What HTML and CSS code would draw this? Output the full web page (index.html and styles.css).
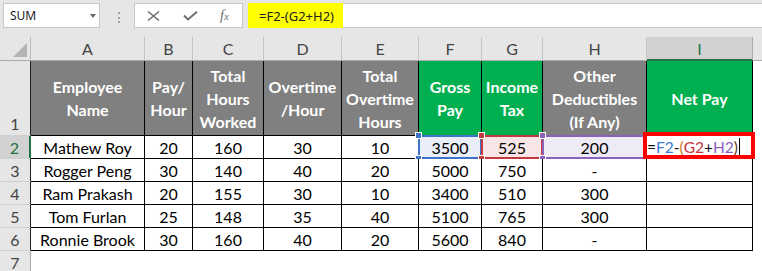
FILE: index.html
```html
<!DOCTYPE html>
<html>
<head>
<meta charset="utf-8">
<title>Net Pay</title>
<link rel="stylesheet" href="styles.css">
</head>
<body>
<div class="toolbar">
  <div class="namebox"><span>SUM</span><span class="caret"></span></div>
  <div class="grip"></div>
  <div class="fxbox">
    <svg class="ico-x" width="13" height="10" viewBox="0 0 13 10"><path d="M1 0.5 L12 9.5 M12 0.5 L1 9.5" stroke="#6e6e6e" stroke-width="1.5" fill="none"/></svg>
    <svg class="ico-ok" width="15" height="10" viewBox="0 0 15 10"><path d="M1 4.5 L5 8.5 L14 0.8" stroke="#6e6e6e" stroke-width="2" fill="none"/></svg>
    <span class="fx">f<span class="fxs">x</span></span>
  </div>
  <div class="fbar"><span class="fhl">=F2-(G2+H2)</span></div>
</div>
<div class="sheet">
  <div class="corner"><span class="tri"></span></div>
  <div class="ch">A</div><div class="ch">B</div><div class="ch">C</div><div class="ch">D</div><div class="ch">E</div><div class="ch">F</div><div class="ch">G</div><div class="ch">H</div><div class="ch sel">I</div><div class="ch last"></div>

  <div class="rh t top">1</div>
  <div class="hd">Employee<br>Name</div>
  <div class="hd">Pay/<br>Hour</div>
  <div class="hd">Total<br>Hours<br>Worked</div>
  <div class="hd">Overtime<br>/Hour</div>
  <div class="hd">Total<br>Overtime<br>Hours</div>
  <div class="hd g">Gross<br>Pay</div>
  <div class="hd g">Income<br>Tax</div>
  <div class="hd">Other<br>Deductibles<br>(If Any)</div>
  <div class="hd g">Net Pay</div>
  <div class="e"></div>

  <div class="rh t sel">2</div>
  <div class="c">Mathew Roy</div><div class="c">20</div><div class="c">160</div><div class="c">30</div><div class="c">10</div>
  <div class="c rf blue">3500<span class="rng"><i class="h tl"></i><i class="h tr"></i><i class="h bl"></i><i class="h br"></i></span></div>
  <div class="c rf red">525<span class="rng"><i class="h tl"></i><i class="h tr"></i><i class="h bl"></i><i class="h br"></i></span></div>
  <div class="c rf purple">200<span class="rng"><i class="h tl"></i><i class="h tr"></i><i class="h bl"></i><i class="h br"></i></span></div>
  <div class="c edit"><span class="k">=</span><span class="kb">F2</span><span class="k">-</span><span class="ko">(</span><span class="kr">G2</span><span class="k">+</span><span class="kp">H2</span><span class="kd">)</span><span class="cur"></span><span class="annot"></span></div>
  <div class="e"></div>

  <div class="rh t">3</div>
  <div class="c">Rogger Peng</div><div class="c">30</div><div class="c">140</div><div class="c">40</div><div class="c">20</div><div class="c">5000</div><div class="c">750</div><div class="c">-</div><div class="c"></div>
  <div class="e"></div>

  <div class="rh t">4</div>
  <div class="c">Ram Prakash</div><div class="c">20</div><div class="c">155</div><div class="c">30</div><div class="c">10</div><div class="c">3400</div><div class="c">510</div><div class="c">300</div><div class="c"></div>
  <div class="e"></div>

  <div class="rh t">5</div>
  <div class="c">Tom Furlan</div><div class="c">25</div><div class="c">148</div><div class="c">35</div><div class="c">40</div><div class="c">5100</div><div class="c">765</div><div class="c">300</div><div class="c"></div>
  <div class="e"></div>

  <div class="rh t">6</div>
  <div class="c">Ronnie Brook</div><div class="c">30</div><div class="c">160</div><div class="c">40</div><div class="c">20</div><div class="c">5600</div><div class="c">840</div><div class="c">-</div><div class="c"></div>
  <div class="e"></div>

  <div class="rh">7</div>
  <div class="e"></div><div class="e"></div><div class="e"></div><div class="e"></div><div class="e"></div><div class="e"></div><div class="e"></div><div class="e"></div><div class="e"></div><div class="e"></div>
</div>
</body>
</html>
```
FILE: styles.css
```css
* { box-sizing: border-box; margin: 0; padding: 0; }
html, body { width: 762px; height: 271px; overflow: hidden; background: #fff; }
body { font-family: "Lato", "Liberation Sans", sans-serif; }

.toolbar { height: 37px; background: #e6e6e6; display: flex; align-items: flex-start; padding-top: 3px; }
.namebox { margin-left: 3px; width: 97px; height: 25px; background: #fff; border: 1px solid #c6c6c6; display: flex; align-items: center; justify-content: space-between; padding: 0 3px 0 6px; font: 12px "Noto Sans", sans-serif; color: #222; }
.caret { width: 0; height: 0; border-left: 3.5px solid transparent; border-right: 3.5px solid transparent; border-top: 4px solid #666; }
.grip { margin-left: 18px; margin-top: 9px; width: 2px; height: 11px; border-left: 2px dotted #a0a0a0; }
.fxbox { margin-left: 14px; width: 109px; height: 25px; background: #fff; border: 1px solid #c6c6c6; display: flex; align-items: center; padding-left: 12px; }
.ico-x { margin-top: 1px; }
.ico-ok { margin-left: 23px; margin-top: 1px; }
.fx { margin-left: 22px; font: italic 14px "Liberation Serif", serif; color: #6e6e6e; }
.fxs { font-size: 11px; }
.fbar { margin-left: 5px; flex: 1; height: 25px; background: #fff; border: 1px solid #c6c6c6; border-right: none; }
.fhl { display: flex; align-items: center; width: 95px; height: 25px; margin: -1px 0 0 -1px; background: #ffff00; padding-left: 11px; font: 13px "Noto Sans", sans-serif; color: #222; }

.sheet { display: grid; grid-template-columns: 31px 114px 48px 71px 78px 77px 63px 61px 104px 106px 1fr; grid-template-rows: 24px 75px repeat(6, 23px); font-size: 16px; }
.corner { background: #e6e6e6; border-right: 1px solid #bcbcbc; border-bottom: 1px solid #ababab; position: relative; }
.tri { position: absolute; right: 3px; bottom: 3px; width: 0; height: 0; border-left: 14px solid transparent; border-bottom: 14px solid #b4b4b4; }
.ch { background: #e6e6e6; border-right: 1px solid #c4c4c4; border-bottom: 1px solid #ababab; color: #444; display: flex; align-items: center; justify-content: center; }
.ch.sel { background: #d2d2d2; color: #217346; border-bottom: 2px solid #217346; border-right-color: #ababab; }
.ch.last { border-right: none; }
.rh { background: #e6e6e6; border-right: 1px solid #ababab; border-bottom: 1px solid #cfcfcf; color: #444; display: flex; align-items: center; justify-content: center; }
.rh.t { border-right-color: #222; }
.rh.top { align-items: flex-end; padding-bottom: 2px; }
.rh.sel { background: #d2d2d2; color: #217346; border-right: 2px solid #217346; }

.hd { background: #808080; color: #fff; font-weight: 700; line-height: 23px; text-align: center; display: flex; flex-direction: column; justify-content: center; border-right: 1px solid #000; border-bottom: 1px solid #000; }
.hd.g { background: #00b050; }
.c { background: #fff; color: #000; border-right: 1px solid #000; border-bottom: 1px solid #000; display: flex; align-items: center; justify-content: center; position: relative; }
.e { background: #fff; }

.rf.blue { background: #e9eef8; --c: #3e73c9; }
.rf.red { background: #f8e6e6; --c: #c23a3f; }
.rf.purple { background: #efebf6; --c: #8a63b8; }
.rng { position: absolute; left: -1px; top: -1px; right: -1px; bottom: -1px; border: 2px solid var(--c); }
.h { position: absolute; width: 7px; height: 7px; background: var(--c); border: 1px solid #fff; }
.h.tl { left: -5px; top: -5px; }
.h.tr { right: -5px; top: -5px; }
.h.bl { left: -5px; bottom: -5px; }
.h.br { right: -5px; bottom: -5px; }

.edit { justify-content: flex-start; padding-left: 0; font-size: 15.5px; }
.k { color: #111; }
.kb { color: #3a78d4; }
.ko { color: #d9761c; }
.kr { color: #c8323c; }
.kp { color: #8a5fc0; }
.kd { color: #5a3a14; }
.cur { display: inline-block; width: 1px; height: 18px; background: #000; margin-left: 1px; }
.annot { position: absolute; left: -4px; top: -4px; right: -3px; bottom: -1px; border: 4px solid #ff0000; }
```
